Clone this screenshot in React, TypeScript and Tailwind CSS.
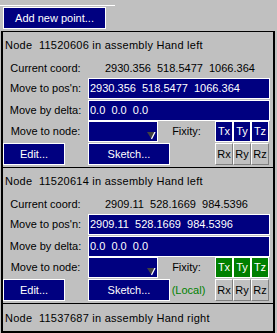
import React from "react";

type PanelProps = {
  node: string;
  assembly: string;
  coord: string;
  green?: boolean;
  local?: boolean;
};

function Arrow() {
  return (
    <svg width="9" height="8" viewBox="0 0 9 8" className="block">
      <polygon points="0,0 8,0 4.5,7" fill="#404040" />
      <line x1="8" y1="0" x2="4.5" y2="7" stroke="#ffffff" strokeWidth="1.2" />
    </svg>
  );
}

function Panel({ node, assembly, coord, green, local }: PanelProps) {
  const tBtn = green
    ? "w-[18px] h-full bg-[#008000] border border-white text-white flex items-center justify-center"
    : "w-[18px] h-full bg-[#000080] border border-white text-white flex items-center justify-center";
  const rBtn =
    "w-[18px] h-full bg-[#c0c0c0] border border-t-white border-l-white border-r-[#808080] border-b-[#808080] text-black flex items-center justify-center";
  return (
    <div className="border-t border-black pb-[2px]">
      <div className="h-[26px] flex items-center pl-[2px] whitespace-pre tracking-[0.25px]">
        {`Node  ${node} in assembly ${assembly}`}
      </div>
      <div className="h-[20px] flex items-center whitespace-pre">
        <div className="w-[85px] text-center">Current coord:</div>
        <div className="ml-[17px]">{coord}</div>
      </div>
      <div className="h-[21px] flex items-stretch whitespace-pre">
        <div className="w-[85px] text-center flex items-center justify-center">Move to pos'n:</div>
        <div className="w-[182px] bg-[#000080] border border-white text-white flex items-center pl-px">
          {coord}
        </div>
      </div>
      <div className="h-[21px] mt-px flex items-stretch whitespace-pre">
        <div className="w-[85px] text-center flex items-center justify-center">Move by delta:</div>
        <div className="w-[182px] bg-[#000080] border border-white text-white flex items-center pl-px">
          {"0.0  0.0  0.0"}
        </div>
      </div>
      <div className="h-[21px] flex items-stretch">
        <div className="w-[85px] text-center flex items-center justify-center">Move to node:</div>
        <div className="w-[70px] bg-[#000080] border border-white flex items-end justify-end pr-[1px] pb-[1px]">
          <Arrow />
        </div>
        <div className="w-[57px] flex items-center justify-center">Fixity:</div>
        <div className={tBtn}>Tx</div>
        <div className={tBtn}>Ty</div>
        <div className={tBtn}>Tz</div>
      </div>
      <div className="h-[22px] mt-px flex items-stretch">
        <div className="w-[62px] bg-[#000080] border border-white text-white flex items-center justify-center">
          Edit...
        </div>
        <div className="w-[23px]" />
        <div className="w-[82px] bg-[#000080] border border-white text-white flex items-center justify-center">
          Sketch...
        </div>
        <div className="w-[45px] pr-[8px] flex items-center justify-center text-[#008000]">
          {local ? "(Local)" : ""}
        </div>
        <div className={rBtn}>Rx</div>
        <div className={rBtn}>Ry</div>
        <div className={rBtn}>Rz</div>
      </div>
    </div>
  );
}

export default function App() {
  return (
    <div
      className="w-[277px] h-[333px] bg-[#c0c0c0] overflow-hidden text-[11px] leading-none text-black"
      style={{ fontFamily: "'Liberation Sans', Arial, sans-serif" }}
    >
      <div className="pt-[5px]">
        <div className="w-[115px] h-px bg-white" />
        <div className="mt-px ml-[3px] w-[103px] h-[22px] bg-[#000080] border border-white text-white flex items-center justify-center">
          Add new point...
        </div>
      </div>
      <div className="mt-[2px] ml-px w-[274px] border-l-2 border-r-2 border-b-2 border-black">
        <Panel node="11520606" assembly="Hand left" coord="2930.356  518.5477  1066.364" />
        <Panel node="11520614" assembly="Hand left" coord="2909.11  528.1669  984.5396" green local />
        <div className="border-t border-black">
          <div className="h-[27px] pt-px flex items-center pl-[2px] whitespace-pre tracking-[0.25px]">
            {"Node  11537687 in assembly Hand right"}
          </div>
        </div>
      </div>
    </div>
  );
}
